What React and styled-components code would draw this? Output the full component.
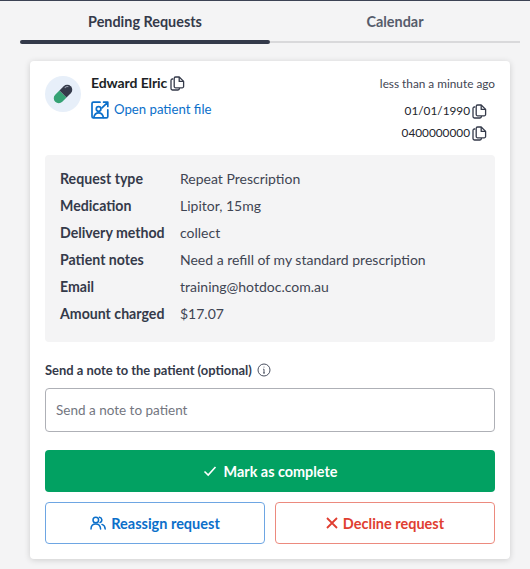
import React from "react";
import styled, { createGlobalStyle } from "styled-components";

const Global = createGlobalStyle`
  html, body { margin: 0; padding: 0; background: #f4f4f5; }
  body { font-family: Lato, "Open Sans", sans-serif; color: #343a4a; -webkit-font-smoothing: antialiased; }
  * { box-sizing: border-box; }
`;

const Page = styled.div`
  width: 530px;
  height: 569px;
  overflow: hidden;
  border-top: 1px solid #3c4354;
  padding: 0 10px 0 20px;
`;
const Tabs = styled.div`
  display: flex;
  height: 43px;
`;
const Tab = styled.div`
  flex: 1;
  display: flex;
  justify-content: center;
  padding-top: 12px;
  font-size: 14.4px;
  line-height: 18px;
  font-weight: 700;
  color: ${(p) => (p.$active ? "#343a4a" : "#565c6b")};
  position: relative;
  &::after {
    content: "";
    position: absolute;
    left: 0;
    right: 0;
    top: ${(p) => (p.$active ? "39px" : "40px")};
    height: ${(p) => (p.$active ? "4px" : "2px")};
    border-radius: ${(p) => (p.$active ? "2px" : "0")};
    background: ${(p) => (p.$active ? "#343a4a" : "#d9d9db")};
    z-index: ${(p) => (p.$active ? 1 : 0)};
  }
`;
const Card = styled.div`
  margin: 17px 0 0 10px;
  width: 480px;
  height: 498px;
  background: #fff;
  border-radius: 4px;
  box-shadow: 0 1px 6px rgba(0, 0, 0, 0.16);
  padding: 15px;
`;
const Header = styled.div`
  display: flex;
  height: 79px;
`;
const Avatar = styled.div`
  width: 36px;
  height: 36px;
  border-radius: 50%;
  background: #e7eff9;
  display: flex;
  align-items: center;
  justify-content: center;
  margin-right: 10px;
`;
const Who = styled.div`
  flex: 1;
  display: flex;
  flex-direction: column;
  margin-top: -1px;
`;
const Name = styled.div`
  display: flex;
  align-items: center;
  gap: 3px;
  font-size: 14px;
  line-height: 16px;
  font-weight: 700;
  letter-spacing: -0.1px;
  color: #1c1f26;
`;
const FileLink = styled.a`
  display: flex;
  align-items: center;
  gap: 5px;
  margin-top: 8px;
  font-size: 13.2px;
  line-height: 18px;
  color: #0b6fca;
`;
const OpenSvg = styled.svg`
  margin-top: 2px;
`;
const Meta = styled.div`
  display: flex;
  flex-direction: column;
  align-items: flex-end;
`;
const Ago = styled.div`
  font-size: 11.8px;
  line-height: 16px;
  color: #3f4553;
`;
const MetaRows = styled.div`
  margin-top: 8px;
  display: flex;
  flex-direction: column;
  align-items: flex-end;
`;
const MetaRow = styled.div`
  display: flex;
  align-items: center;
  gap: 2px;
  font-size: 11.8px;
  line-height: 22px;
  color: #22252d;
  padding-right: 8px;
`;
const Details = styled.div`
  background: #f4f4f5;
  border-radius: 4px;
  height: 187px;
  padding: 10px 15px;
  display: grid;
  grid-template-columns: 120px 1fr;
  grid-auto-rows: 27px;
  align-items: center;
  font-size: 14px;
`;
const Term = styled.div`
  font-size: 14.15px;
  font-weight: 700;
  color: #343a4a;
`;
const Value = styled.div`
  color: #3f4553;
  font-size: 14px;
`;
const NoteLabel = styled.div`
  margin-top: 20px;
  display: flex;
  align-items: center;
  gap: 5px;
  height: 16px;
  font-size: 12.95px;
  font-weight: 700;
  color: #343a4a;
`;
const NoteInput = styled.input`
  display: block;
  width: 100%;
  height: 44px;
  margin-top: 10px;
  padding: 0 10px;
  border: 1px solid #aeb0b6;
  border-radius: 4px;
  font: 400 13.5px Lato, sans-serif;
  color: #343a4a;
  outline: none;
  &::placeholder { color: #73767f; opacity: 1; }
`;
const Complete = styled.button`
  width: 100%;
  height: 42px;
  margin-top: 18px;
  border: 0;
  border-radius: 4px;
  background: #02a162;
  color: #fff;
  font: 700 14.4px Lato, sans-serif;
  display: flex;
  align-items: center;
  justify-content: center;
  gap: 7px;
`;
const Actions = styled.div`
  display: grid;
  grid-template-columns: 1fr 1fr;
  gap: 10px;
  margin-top: 10px;
`;
const Outline = styled.button`
  height: 42px;
  background: #fff;
  border: 1px solid ${(p) => (p.$danger ? "#ec8a7e" : "#6ea6e3")};
  border-radius: 4px;
  color: ${(p) => (p.$danger ? "#e03e31" : "#0b6fca")};
  font: 700 14.5px Lato, sans-serif;
  display: flex;
  align-items: center;
  justify-content: center;
  gap: 5px;
`;

const CopyIcon = () => (
  <svg width="15" height="15" viewBox="0 0 15 15" fill="none" stroke="#343a4a" strokeWidth="1.3" strokeLinejoin="round">
    <path d="M3.2 3 H2.4 A1.4 1.4 0 0 0 1 4.4 V12.6 A1.4 1.4 0 0 0 2.4 14 H8 A1.4 1.4 0 0 0 9.4 12.6 V12" />
    <path d="M4.2 2.4 A1.4 1.4 0 0 1 5.6 1 H9.2 L13.6 5.4 V10.4 A1.4 1.4 0 0 1 12.2 11.8 H5.6 A1.4 1.4 0 0 1 4.2 10.4 Z" />
    <path d="M9.2 1 V5.4 H13.6" />
  </svg>
);
const Pill = () => (
  <svg width="24" height="24" viewBox="0 0 24 24">
    <g transform="rotate(-45 12 12)">
      <path d="M12 7 H6 A5 5 0 0 0 6 17 H12 Z" fill="#35a274" />
      <path d="M12 7 H18 A5 5 0 0 1 18 17 H12 Z" fill="#343a4a" />
      <path d="M18 9 H18.6 A3 3 0 0 1 20.8 10.4" fill="none" stroke="#9aa0ae" strokeWidth="1" strokeLinecap="round" />
    </g>
  </svg>
);
const OpenFileIcon = () => (
  <OpenSvg width="18" height="18" viewBox="0 0 18 18" fill="none" stroke="#0b6fca" strokeWidth="1.7" strokeLinecap="round" strokeLinejoin="round">
    <path d="M9 1.2 H2.4 A1.4 1.4 0 0 0 1 2.6 V15.4 A1.4 1.4 0 0 0 2.4 16.8 H15.4 A1.4 1.4 0 0 0 16.8 15.4 V8.8" />
    <circle cx="7.6" cy="8" r="2.3" />
    <path d="M2.8 16.4 C3.4 13.4 5.2 11.8 7.6 11.8 C10 11.8 11.8 13.4 12.4 16.4" />
    <path d="M11 6.8 L16.6 1.4 M12.6 1.2 H16.8 V5.4" />
  </OpenSvg>
);
const InfoIcon = () => (
  <svg width="14" height="14" viewBox="0 0 14 14" fill="none" stroke="#4a5060" strokeWidth="1">
    <circle cx="7" cy="7" r="6" />
    <path d="M7 6.2 V10 M6 10 H8 M6.2 6.2 H7" />
    <circle cx="7" cy="4" r="0.5" fill="#4a5060" stroke="none" />
  </svg>
);
const Check = () => (
  <svg width="14" height="12" viewBox="0 0 14 12" fill="none" stroke="#fff" strokeWidth="1.6">
    <path d="M1.5 6.5 L5.2 10 L12.5 2" />
  </svg>
);
const People = () => (
  <svg width="16" height="14" viewBox="0 0 16 14" fill="none" stroke="#0b6fca" strokeWidth="1.5" strokeLinecap="round">
    <circle cx="5.8" cy="4" r="2.8" />
    <path d="M1 13 C1 9.6 3 8 5.8 8 C8.6 8 10.4 9.6 10.6 13" />
    <path d="M9.4 1.2 A2.8 2.8 0 0 1 10 6.6 M12 8.4 C14 9 15 10.6 15.2 13" />
  </svg>
);
const Cross = () => (
  <svg width="12" height="12" viewBox="0 0 12 12" fill="none" stroke="#e03e31" strokeWidth="1.8">
    <path d="M1 1 L11 11 M11 1 L1 11" />
  </svg>
);

const rows = [
  ["Request type", "Repeat Prescription"],
  ["Medication", "Lipitor, 15mg"],
  ["Delivery method", "collect"],
  ["Patient notes", "Need a refill of my standard prescription"],
  ["Email", "training@hotdoc.com.au"],
  ["Amount charged", "$17.07"],
];

export default function App() {
  return (
    <Page>
      <Global />
      <Tabs>
        <Tab $active>Pending Requests</Tab>
        <Tab>Calendar</Tab>
      </Tabs>
      <Card>
        <Header>
          <Avatar><Pill /></Avatar>
          <Who>
            <Name>Edward Elric <CopyIcon /></Name>
            <FileLink><OpenFileIcon />Open patient file</FileLink>
          </Who>
          <Meta>
            <Ago>less than a minute ago</Ago>
            <MetaRows>
              <MetaRow>01/01/1990 <CopyIcon /></MetaRow>
              <MetaRow>0400000000 <CopyIcon /></MetaRow>
            </MetaRows>
          </Meta>
        </Header>
        <Details>
          {rows.map(([t, v]) => (
            <React.Fragment key={t}>
              <Term>{t}</Term>
              <Value>{v}</Value>
            </React.Fragment>
          ))}
        </Details>
        <NoteLabel>Send a note to the patient (optional) <InfoIcon /></NoteLabel>
        <NoteInput placeholder="Send a note to patient" />
        <Complete><Check />Mark as complete</Complete>
        <Actions>
          <Outline><People />Reassign request</Outline>
          <Outline $danger><Cross />Decline request</Outline>
        </Actions>
      </Card>
    </Page>
  );
}
